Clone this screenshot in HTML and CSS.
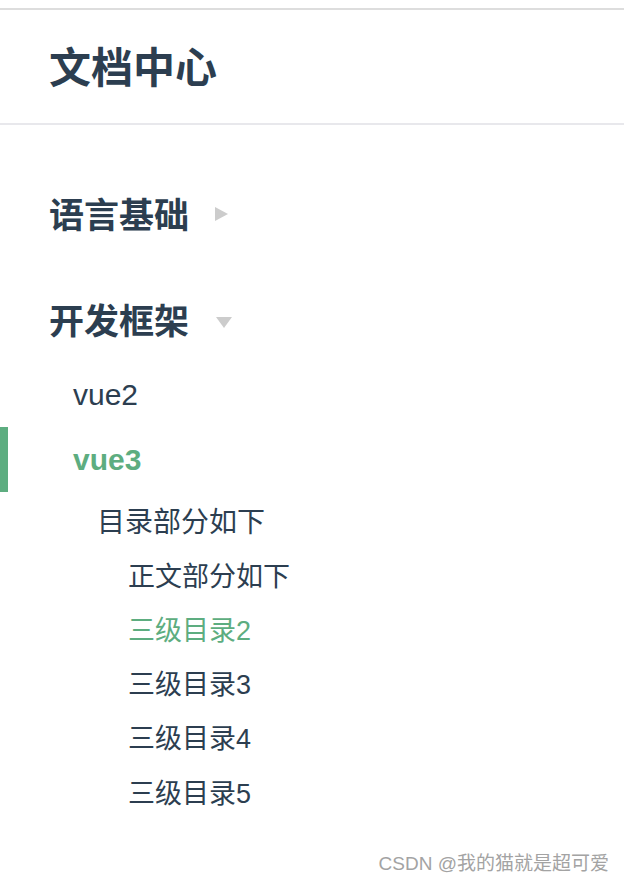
FILE: index.html
```html
<!DOCTYPE html>
<html>
<head>
    <meta charset="UTF-8">
    <title>文档中心</title>
    <link rel="stylesheet" href="styles.css">
</head>
<body>
    <div class="sidebar">
        <div class="sidebar-header">文档中心</div>
        <div class="sidebar-nav">
            <div class="group">
                <div class="group-title">语言基础 <span class="arrow arrow-right"></span></div>
            </div>
            <div class="group">
                <div class="group-title">开发框架 <span class="arrow arrow-down"></span></div>
                <div class="sub-list">
                    <a class="sub-item">vue2</a>
                    <a class="sub-item active">vue3</a>
                    <div class="toc">
                        <div class="toc-title">目录部分如下</div>
                        <a class="toc-item">正文部分如下</a>
                        <a class="toc-item active">三级目录2</a>
                        <a class="toc-item">三级目录3</a>
                        <a class="toc-item">三级目录4</a>
                        <a class="toc-item">三级目录5</a>
                    </div>
                </div>
            </div>
        </div>
    </div>
    <div class="watermark">CSDN @我的猫就是超可爱</div>
</body>
</html>
```

FILE: styles.css
```css
body {
    margin: 0;
    background: #fff;
    font-family: "Liberation Sans", "Noto Sans CJK SC", sans-serif;
    color: #2c3e50;
    overflow: hidden;
}

.sidebar {
    margin-top: 8px;
    border-top: 2px solid #dddddd;
    min-height: 874px;
}

.sidebar-header {
    height: 109px;
    padding-left: 49px;
    padding-bottom: 4px;
    display: flex;
    align-items: center;
    font-size: 42px;
    font-weight: 600;
    border-bottom: 2px solid #e8e8ec;
}

.sidebar-nav {
    padding-top: 10px;
}

.group {
    margin-top: 54px;
}

.group-title {
    height: 47px;
    padding-left: 49px;
    padding-bottom: 5px;
    display: flex;
    align-items: center;
    font-size: 35px;
    font-weight: 600;
}

.arrow {
    display: inline-block;
    width: 0;
    height: 0;
    margin-left: 26px;
}

.arrow-right {
    margin-top: 2px;
    border-left: 13px solid #cccccc;
    border-top: 7.5px solid transparent;
    border-bottom: 7.5px solid transparent;
}

.arrow-down {
    margin-left: 27px;
    margin-top: 7px;
    border-top: 11px solid #cccccc;
    border-left: 8px solid transparent;
    border-right: 8px solid transparent;
}

.sub-list {
    margin-top: 16px;
}

.sub-item {
    display: flex;
    align-items: center;
    height: 64px;
    padding-left: 65px;
    border-left: 8px solid transparent;
    font-size: 30px;
    cursor: pointer;
}

.sub-item.active {
    height: 65px;
    color: #5dad80;
    font-weight: bold;
    border-left-color: #5dad80;
}

.toc {
    margin-top: 1px;
}

.toc-title {
    display: flex;
    align-items: center;
    height: 54.2px;
    padding-left: 97px;
    font-size: 28px;
}

.toc-item {
    display: flex;
    align-items: center;
    height: 54.2px;
    padding-left: 128px;
    font-size: 27px;
    cursor: pointer;
}

.toc-item.active {
    color: #5dad80;
}

.watermark {
    position: absolute;
    right: 15px;
    bottom: 9px;
    font-size: 19px;
    color: #a3a3a3;
}
```
